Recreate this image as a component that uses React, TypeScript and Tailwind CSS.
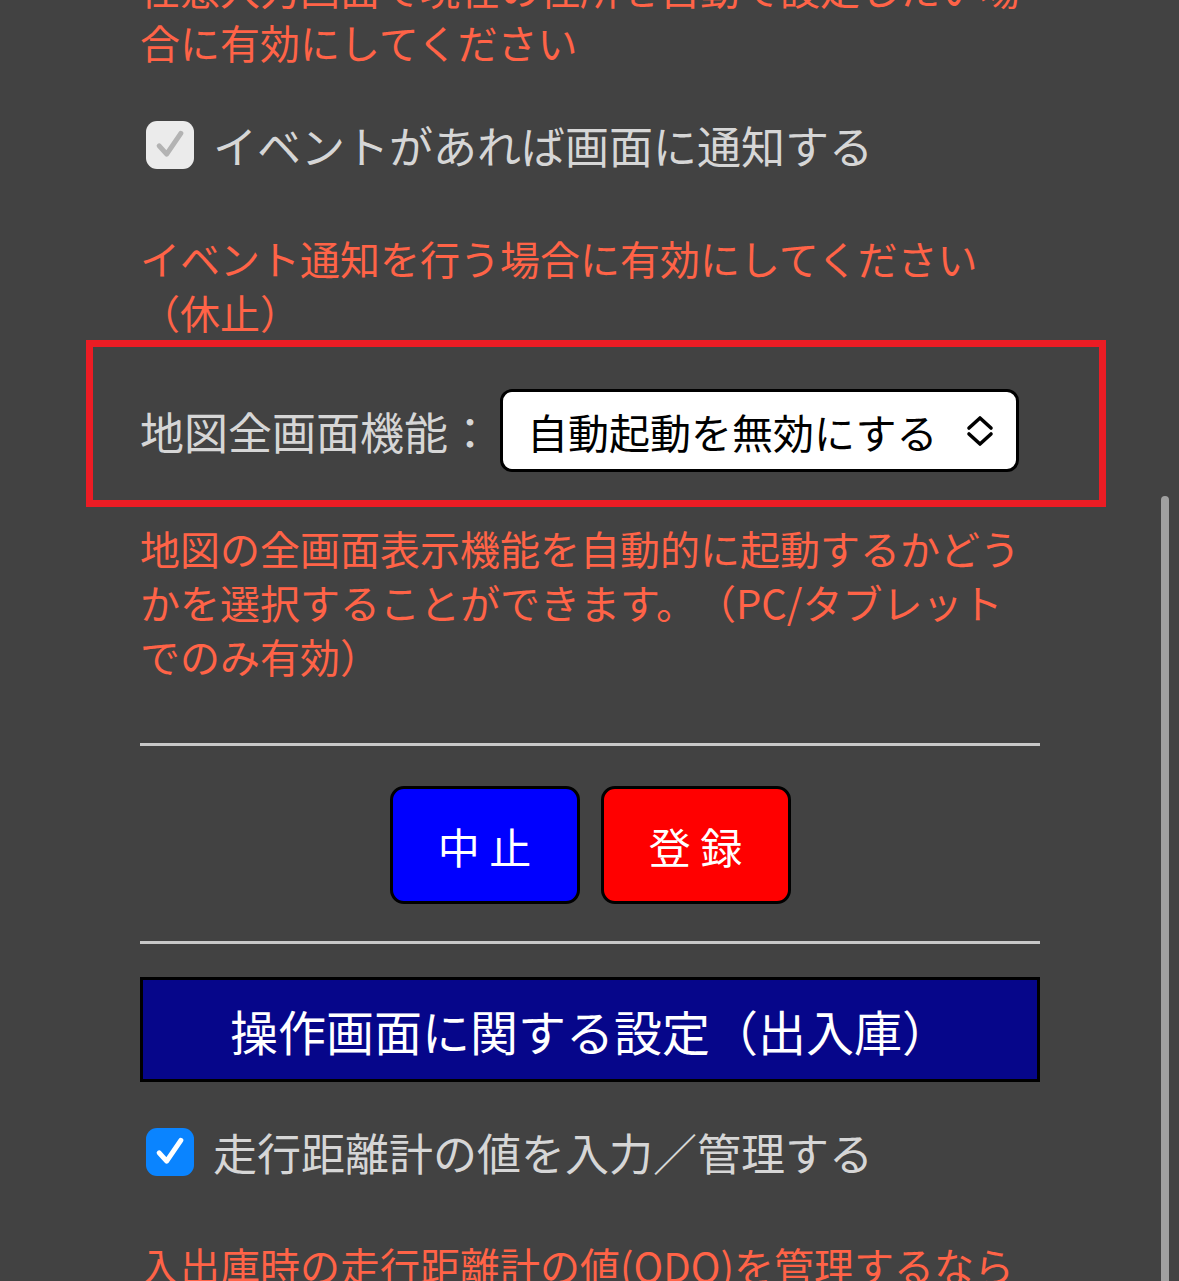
const font = { fontFamily: '"Noto Sans CJK JP", "Noto Sans", sans-serif' }

function CheckRow({ label, checked }: { label: string; checked: boolean }) {
  return (
    <div className="flex h-[54px] items-center gap-[19px] pl-[6px]">
      <span
        className={
          checked
            ? "flex size-[48px] items-center justify-center rounded-[11px] bg-[#0a84ff]"
            : "flex size-[48px] items-center justify-center rounded-[11px] bg-[#ebebeb]"
        }
      >
        <svg viewBox="0 0 24 24" className="size-[40px]" fill="none">
          <path
            d="M5.5 12.5l4.5 5L18.5 5"
            stroke={checked ? "#ffffff" : "#b3b3b3"}
            strokeWidth="3"
            strokeLinecap="round"
            strokeLinejoin="round"
          />
        </svg>
      </span>
      <span className="text-[44px] leading-[54px] text-[#d6d6d6]">{label}</span>
    </div>
  )
}

function Note({ children, className = "" }: { children: React.ReactNode; className?: string }) {
  return <p className={"text-[40px] leading-[54px] text-[#ff6347] " + className}>{children}</p>
}

export default function App() {
  return (
    <div
      className="relative h-[1281px] w-[1179px] overflow-hidden bg-[#424242] [text-spacing-trim:space-all]"
      style={font}
    >
      <div className="ml-[140px] flex w-[900px] flex-col">
        <Note className="mt-[-39px]">
          任意入力画面で現在の住所を自動で設定したい場合に有効にしてください
        </Note>

        <div className="mt-[49px]">
          <CheckRow label="イベントがあれば画面に通知する" checked={false} />
        </div>

        <Note className="mt-[59px]">イベント通知を行う場合に有効にしてください（休止）</Note>

        <div className="mt-[1px] -ml-[54px] w-[1020px] border-[7px] border-[#ec1c24] pb-[28px] pl-[47px] pt-[42px]">
          <div className="flex items-center gap-[8px]">
            <span className="text-[44px] leading-[54px] text-[#d6d6d6]">地図全画面機能：</span>
            <div className="flex h-[83px] w-[519px] items-center justify-between rounded-[12px] border-[3px] border-black bg-white pl-[24px] pr-[22px]">
              <span className="text-[41px] leading-[54px] text-black">自動起動を無効にする</span>
              <svg viewBox="0 0 28 34" className="h-[34px] w-[28px]" fill="none">
                <path
                  d="M3 14L14 4L25 14M3 20L14 30L25 20"
                  stroke="#000"
                  strokeWidth="3.6"
                  strokeLinecap="round"
                  strokeLinejoin="round"
                />
              </svg>
            </div>
          </div>
        </div>

        <Note className="mt-[14px]">
          地図の全画面表示機能を自動的に起動するかどうかを選択することができます。（PC/タブレットでのみ有効）
        </Note>

        <div className="mt-[60px] h-[3px] bg-[#c8c8c8]" />

        <div className="mt-[40px] flex justify-center gap-[21px]">
          <button className="flex h-[118px] w-[190px] items-center justify-center rounded-[14px] border-[3px] border-black bg-[#0000ff] text-[42px] text-white">
            中 止
          </button>
          <button className="flex h-[118px] w-[190px] items-center justify-center rounded-[14px] border-[3px] border-black bg-[#ff0000] text-[42px] text-white">
            登 録
          </button>
        </div>

        <div className="mt-[37px] h-[3px] bg-[#c8c8c8]" />

        <div className="mt-[33px] flex h-[105px] items-center justify-center border-[3px] border-black bg-[#06068a]">
          <span className="text-[48px] leading-[60px] text-white">操作画面に関する設定（出入庫）</span>
        </div>

        <div className="mt-[43px]">
          <CheckRow label="走行距離計の値を入力／管理する" checked />
        </div>

        <Note className="mt-[59px]">入出庫時の走行距離計の値(ODO)を管理するなら</Note>
      </div>

      <div className="absolute left-[1161px] top-[496px] h-[800px] w-[8px] rounded-full bg-[#a0a0a0]" />
    </div>
  )
}
